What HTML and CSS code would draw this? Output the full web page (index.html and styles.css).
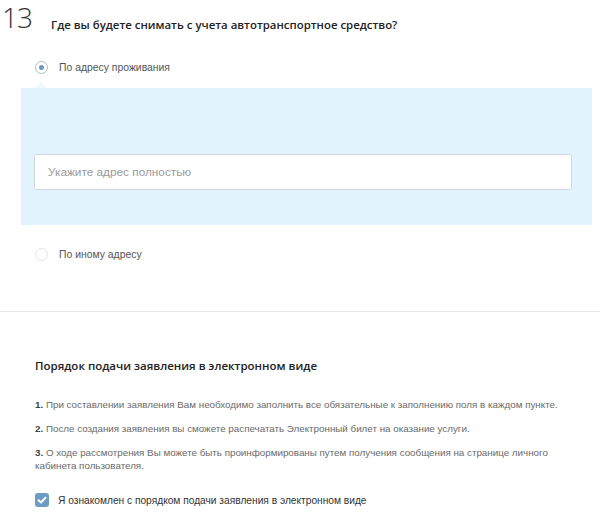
FILE: index.html
```html
<!DOCTYPE html>
<html lang="ru">
<head>
<meta charset="utf-8">
<link rel="stylesheet" href="styles.css">
</head>
<body>
<div class="page">
  <div class="q-head">
    <span class="q-num">13</span>
    <span class="q-title">Где вы будете снимать с учета автотранспортное средство?</span>
  </div>
  <div class="options">
    <label class="radio-row">
      <span class="radio checked"></span>
      <span class="radio-label">По адресу проживания</span>
    </label>
    <div class="address-box">
      <div class="input">Укажите адрес полностью</div>
    </div>
    <label class="radio-row second">
      <span class="radio"></span>
      <span class="radio-label">По иному адресу</span>
    </label>
  </div>
  <div class="divider"></div>
  <div class="rules">
    <h2 class="rules-title">Порядок подачи заявления в электронном виде</h2>
    <p class="rule"><b>1.</b> При составлении заявления Вам необходимо заполнить все обязательные к заполнению поля в каждом пункте.</p>
    <p class="rule"><b>2.</b> После создания заявления вы сможете распечатать Электронный билет на оказание услуги.</p>
    <p class="rule"><b>3.</b> О ходе рассмотрения Вы можете быть проинформированы путем получения сообщения на странице личного кабинета пользователя.</p>
    <label class="check-row">
      <span class="checkbox"><svg viewBox="0 0 14 14" width="14" height="14"><path d="M3.5 7.2 L6 9.5 L10.5 4.8" fill="none" stroke="#fff" stroke-width="2" stroke-linecap="round" stroke-linejoin="round"/></svg></span>
      <span class="check-label">Я ознакомлен с порядком подачи заявления в электронном виде</span>
    </label>
  </div>
</div>
</body>
</html>
```

FILE: styles.css
```css
html, body {
  margin: 0;
  padding: 0;
  background: #fff;
}
.page {
  width: 600px;
  font-family: "Liberation Sans", Arial, sans-serif;
}
.q-head {
  display: flex;
  align-items: baseline;
  padding: 0 0 0 2px;
  height: 34px;
}
.q-num {
  font-family: "Open Sans", sans-serif;
  font-weight: 300;
  font-size: 28px;
  line-height: 34px;
  color: #333;
  width: 49px;
  letter-spacing: -1px;
}
.q-title {
  font-family: "Open Sans", sans-serif;
  font-weight: 600;
  font-size: 11.4px;
  color: #222;
  position: relative;
  top: 1px;
}
.options {
  padding: 25px 8px 0 21px;
}
.radio-row {
  display: flex;
  align-items: center;
  height: 16px;
  padding-left: 14px;
}
.radio {
  width: 11px;
  height: 11px;
  border: 1px solid #a7bfcf;
  border-radius: 50%;
  box-sizing: content-box;
  position: relative;
  margin-right: 11px;
  background: #fff;
}
.radio.checked::after {
  content: "";
  position: absolute;
  left: 3px;
  top: 3px;
  width: 5px;
  height: 5px;
  border-radius: 50%;
  background: #6f97b3;
}
.radio-row.second .radio {
  border-color: #e2e6e9;
}
.radio-label {
  font-size: 10.4px;
  color: #555;
}
.address-box {
  position: relative;
  margin-top: 13px;
  background: #e1f3fc;
  padding: 66px 20px 35px 13px;
}
.address-box::before {
  content: "";
  position: absolute;
  left: 14px;
  top: -6px;
  border-left: 6px solid transparent;
  border-right: 6px solid transparent;
  border-bottom: 6px solid #eef8fd;
}
.input {
  height: 34px;
  border: 1px solid #cfd8de;
  border-radius: 2px;
  background: #fff;
  font-size: 11.8px;
  color: #9a9a9a;
  line-height: 34px;
  padding-left: 13px;
}
.radio-row.second {
  margin-top: 21px;
}
.divider {
  margin-top: 49px;
  height: 1px;
  background: #e6e6e6;
}
.rules {
  padding: 44px 20px 0 35px;
}
.rules-title {
  margin: 0;
  font-family: "Open Sans", sans-serif;
  font-weight: 600;
  font-size: 11.5px;
  line-height: 20px;
  color: #222;
}
.rule {
  margin: 22px 0 0;
  font-size: 9.8px;
  line-height: 13px;
  color: #6a6a6a;
}
.rule + .rule {
  margin-top: 11px;
}
.rule b {
  color: #444;
}
.check-row {
  display: flex;
  align-items: center;
  margin-top: 21px;
}
.checkbox {
  width: 14px;
  height: 14px;
  border-radius: 3px;
  background: #6b9dc4;
  display: flex;
  margin-right: 9px;
}
.check-label {
  font-size: 10.2px;
  color: #333;
}
```
